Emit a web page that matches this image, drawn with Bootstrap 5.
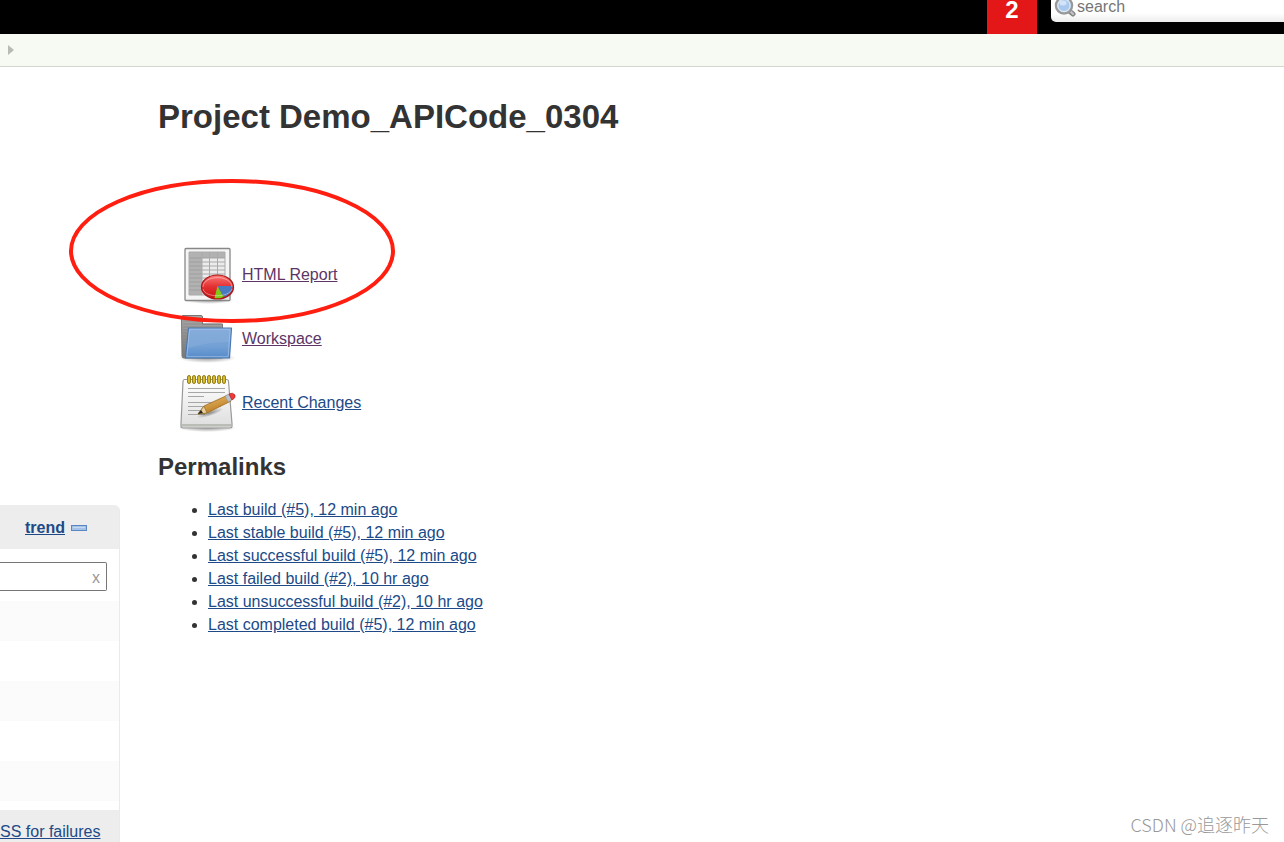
<!DOCTYPE html>
<html lang="en">
<head>
<meta charset="utf-8">
<meta name="viewport" content="width=device-width, initial-scale=1">
<title>Demo_APICode_0304 [Jenkins]</title>
<link href="https://cdn.jsdelivr.net/npm/bootstrap@5.3.0/dist/css/bootstrap.min.css" rel="stylesheet">
<style>
body { font-family: "Liberation Sans", Arial, sans-serif; font-size: 16px; line-height: 23px; color: #333; background: #fff; }
a { color: #204a87; }
a.seen { color: #5c3566; }
.top-bar { height: 34px; background: #000; gap: 14px; }
.alert-count { width: 50px; background: #e31717; color: #fff; font-size: 24px; font-weight: 700; line-height: 20px; }
.search-field { width: 233px; height: 22px; background: linear-gradient(#fff 60%, #ececec); border-radius: 0 0 0 5px; padding: 0 0 8px 3px; gap: 1px; }
.search-field input { border: 0; background: none; outline: 0; padding: 0; height: 14px; line-height: 14px; color: #333; min-width: 0; }
.search-field input::placeholder { color: #757575; opacity: 1; }
.crumbs { height: 33px; background: #f6faf2; border-bottom: 1px solid #d3d7cf; padding-left: 7px; }
.side-col { width: 120px; padding-top: 438px; }
.history { border-right: 1px solid #eaeaea; border-radius: 0 6px 0 0; }
.history-head { height: 44px; background: #ededed; border-radius: 0 5px 0 0; padding-left: 25px; gap: 6px; }
.filter { margin: 13px 12px 10px 0; }
.filter input { width: 100%; height: 29px; border: 1px solid #767676; border-left: 0; border-radius: 0 2px 2px 0; outline: 0; padding: 0 24px 0 0; }
.filter button { right: 7px; top: 5px; border: 0; background: none; padding: 0; color: #999; line-height: 22px; }
.build-row { height: 40px; }
.build-row:nth-child(odd) { background: #fbfbfb; }
.history-foot { margin-top: 9px; height: 32px; padding: 12px 19px 0 0; background: #ededed; line-height: 20px; }
.main-col { padding: 29px 24px 0 38px; }
h1 { font-size: 33px; line-height: 42px; font-weight: 700; margin: 0; }
h2 { font-size: 24px; line-height: 30px; font-weight: 700; margin: 18px 0 16px; }
.shortcuts { margin-top: 104px; padding-left: 18px; }
.shortcut { height: 64px; gap: 2px; }
.ring { left: -90px; top: -64px; pointer-events: none; }
.permalinks { padding-left: 50px; margin: 0; }
.watermark { right: 15px; bottom: 5px; font-family: "Noto Sans CJK SC", sans-serif; font-size: 18px; font-weight: 300; line-height: 26px; color: #999; }
</style>
</head>
<body>
<div class="position-relative min-vh-100">
<header class="top-bar d-flex justify-content-end">
  <div class="alert-count text-center">2</div>
  <label class="search-field d-flex align-items-center flex-shrink-0" aria-label="search">
    <svg width="22" height="22" viewBox="0 0 22 22" class="flex-shrink-0" aria-hidden="true">
      <path d="M14 14l5 4" stroke="#888" stroke-width="5" stroke-linecap="round"/>
      <path d="M15 14l4 4" stroke="#c4c4c4" stroke-width="2" stroke-linecap="round"/>
      <circle cx="10" cy="9.500" r="8" fill="#a9c8ee" stroke="#999" stroke-width="2.500"/>
      <circle cx="10" cy="9.500" r="6.200" fill="none" stroke="#dfeaf7" stroke-width="1.200"/>
      <ellipse cx="9" cy="7" rx="3.500" ry="2.500" fill="#d4e4f8"/>
    </svg>
    <input type="search" placeholder="search" class="flex-grow-1">
  </label>
</header>
<nav class="crumbs d-flex align-items-center" aria-label="breadcrumb">
  <svg width="8" height="10" viewBox="0 0 8 10" aria-hidden="true"><path d="M1 0l6 5-6 5z" fill="#b8bab6"/></svg>
</nav>
<div class="d-flex">
  <aside class="side-col flex-shrink-0">
    <div class="history">
      <div class="history-head d-flex align-items-center">
        <a href="#" class="fw-bold">trend</a>
        <svg width="16" height="8" viewBox="0 0 16 8" aria-hidden="true"><rect x=".5" y="2.500" width="15" height="5" fill="#a5c3e8" stroke="#5b87c0"/><path d="M2 4.500h12" stroke="#c5daf2"/></svg>
      </div>
      <div class="filter position-relative">
        <input type="text" aria-label="find">
        <button type="button" class="position-absolute" aria-label="Clear">x</button>
      </div>
      <div>
        <div class="build-row"></div>
        <div class="build-row"></div>
        <div class="build-row"></div>
        <div class="build-row"></div>
        <div class="build-row"></div>
      </div>
      <div class="history-foot text-end text-nowrap"><a href="#">SS for failures</a></div>
    </div>
  </aside>
  <main class="main-col flex-grow-1">
    <h1>Project Demo_APICode_0304</h1>
    <div class="shortcuts position-relative">
      <div class="shortcut d-flex align-items-center">
        <svg width="64" height="64" viewBox="0 0 64 64" aria-hidden="true">
          <defs>
            <linearGradient id="pie" x2="0" y2="1"><stop stop-color="#f77"/><stop offset=".5" stop-color="#e22f2f"/><stop offset="1" stop-color="#c11"/></linearGradient>
            <radialGradient id="shade"><stop stop-color="#000" stop-opacity=".4"/><stop offset="1" stop-color="#000" stop-opacity="0"/></radialGradient>
          </defs>
          <ellipse cx="33" cy="58" rx="25" ry="4" fill="url(#shade)"/>
          <rect x="9" y="6.500" width="45" height="52" rx="1" fill="#f5f5f5" stroke="#888" stroke-width="1.300"/>
          <path d="M13 10h36v43H13z" fill="#ececec"/>
          <path d="M13 10h36v6H26v37H13z" fill="#b2b2b2"/>
          <path d="M13 16h36M13 20h36M13 24h36M13 28h36M13 32h36M13 36h36M13 40h36M13 44h36M13 48h36" stroke="#999" stroke-width=".8"/>
          <path d="M26 10v43M33.500 10v43M41.500 10v43M13 10h36v43H13z" fill="none" stroke="#aaa"/>
          <ellipse cx="43" cy="47" rx="17" ry="13" fill="url(#shade)"/>
          <ellipse cx="41.500" cy="45" rx="16" ry="12" fill="url(#pie)" stroke="#a81616" stroke-width="1.200"/>
          <path d="M41.500 44h15c0 5-3 9-9 11z" fill="#477ac0"/>
          <path d="M41.500 44l-3 12q5 1 9-1z" fill="#7ccb17"/>
          <path d="M27 45c0-12 28-13 29 0M27 47c2 9 26 9 29 0" fill="none" stroke="#fff" stroke-opacity=".4"/>
        </svg>
        <a href="#" class="seen">HTML Report</a>
      </div>
      <div class="shortcut d-flex align-items-center">
        <svg width="64" height="64" viewBox="0 0 64 64" aria-hidden="true">
          <defs><linearGradient id="blue" x2="0" y2="1"><stop stop-color="#7ba5d7"/><stop offset=".6" stop-color="#74a1d5"/><stop offset="1" stop-color="#568bc9"/></linearGradient>
          <linearGradient id="gray" x2="0" y2="1"><stop stop-color="#aaa"/><stop offset="1" stop-color="#777"/></linearGradient></defs>
          <ellipse cx="31" cy="52" rx="29" ry="5" fill="url(#shade)"/>
          <path d="M5.500 11q0-1.500 1.500-1.500h18q1.500 0 1.500 1.500v7h20v34H8q-2 0-2-2z" fill="url(#gray)" stroke="#777"/>
          <path d="M7 12h18M7 15h18M7 18h38M7 21h38M7 24h5M7 27h5M7 30h4M7 33h4M7 36h4M7 39h4M7 42h3M7 45h3M7 48h3" stroke="#777" stroke-opacity=".5"/>
          <path d="M12.500 22H55.500L53.500 52H9.500z" fill="url(#blue)" stroke="#4b78b2" stroke-width="1.200" stroke-linejoin="round"/>
          <path d="M13.500 23.200H54.200L52.200 50.700H10.800z" fill="none" stroke="#a6c5ea" stroke-opacity=".7"/>
          <path d="M13 23h41l-1 13q-22 0-41 6z" fill="#fff" fill-opacity=".08"/>
        </svg>
        <a href="#" class="seen">Workspace</a>
      </div>
      <div class="shortcut d-flex align-items-center">
        <svg width="64" height="64" viewBox="0 0 64 64" aria-hidden="true">
          <defs><linearGradient id="paper" x2="0" y2="1"><stop stop-color="#fff"/><stop offset="1" stop-color="#ddd"/></linearGradient>
          <linearGradient id="wood" x2=".5" y2="1"><stop stop-color="#f3c774"/><stop offset="1" stop-color="#b8771f"/></linearGradient></defs>
          <ellipse cx="31" cy="58" rx="29" ry="4" fill="url(#shade)"/>
          <path d="M8.500 9.500h42q2 0 2 2l3.500 42v3q0 1.500-2 1.500H7q-2 0-2-1.500v-3l2-42q0-2 1.500-2z" fill="url(#paper)" stroke="#999" stroke-width="1.200"/>
          <path d="M6 54h49v2.500H6z" fill="#babdb6"/>
          <path d="M12 18.500h37M12 22.500h37M12 26.500h16M12 32.500h35M12 36.500h33M12 40.500h24M12 44.500h17" stroke="#a6a6a6"/>
          <g fill="#d8bb25" stroke="#968022"><rect x="11.500" y="5.500" width="3" height="8" rx="1.500"/><rect x="16.500" y="5.500" width="3" height="8" rx="1.500"/><rect x="21.500" y="5.500" width="3" height="8" rx="1.500"/><rect x="26.500" y="5.500" width="3" height="8" rx="1.500"/><rect x="31.500" y="5.500" width="3" height="8" rx="1.500"/><rect x="36.500" y="5.500" width="3" height="8" rx="1.500"/><rect x="41.500" y="5.500" width="3" height="8" rx="1.500"/><rect x="46.500" y="5.500" width="3" height="8" rx="1.500"/></g>
          <ellipse cx="34" cy="43" rx="14" ry="3" fill="url(#shade)" transform="rotate(-18 34 43)"/>
          <path d="M22 44l6-8 24-11 3 6-24 12z" fill="url(#wood)" stroke="#9c681c" stroke-width=".8"/>
          <path d="M22 44l6-8 3 7z" fill="#e9cf99" stroke="#8f6a2a" stroke-width=".7"/>
          <path d="M22 44l3-4 2 3z" fill="#222"/>
          <path d="M49 26l4-2 3 6-4 2z" fill="#b9c2cc" stroke="#888" stroke-width=".5"/>
          <path d="M53 24q4-2 6 1 1 3-3 5z" fill="#ef3b3b" stroke="#b52020" stroke-width=".7"/>
        </svg>
        <a href="#">Recent Changes</a>
      </div>
      <!-- highlight drawn around the report link -->
      <svg class="ring position-absolute" width="328" height="146" viewBox="0 0 328 146" aria-hidden="true"><ellipse cx="164" cy="73" rx="161" ry="70" fill="none" stroke="#ff1e10" stroke-width="4"/></svg>
    </div>
    <h2>Permalinks</h2>
    <ul class="permalinks">
      <li><a href="#">Last build (#5), 12 min ago</a></li>
      <li><a href="#">Last stable build (#5), 12 min ago</a></li>
      <li><a href="#">Last successful build (#5), 12 min ago</a></li>
      <li><a href="#">Last failed build (#2), 10 hr ago</a></li>
      <li><a href="#">Last unsuccessful build (#2), 10 hr ago</a></li>
      <li><a href="#">Last completed build (#5), 12 min ago</a></li>
    </ul>
  </main>
</div>
<div class="watermark position-absolute">CSDN @追逐昨天</div>
</div>
<script src="https://cdn.jsdelivr.net/npm/bootstrap@5.3.0/dist/js/bootstrap.bundle.min.js"></script>
</body>
</html>
